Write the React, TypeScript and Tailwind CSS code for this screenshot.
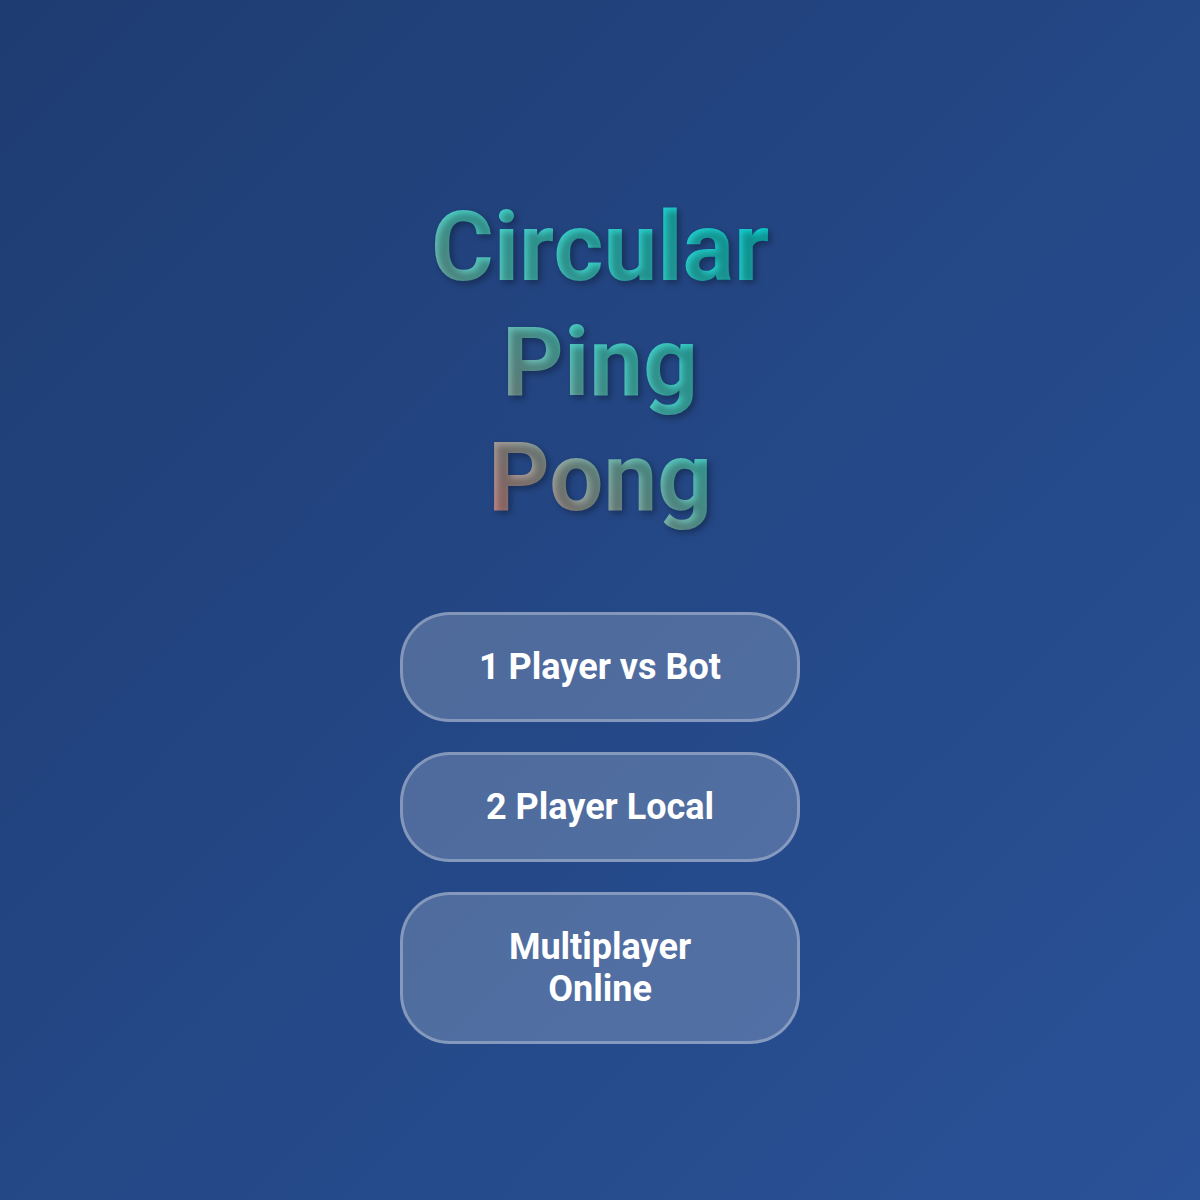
import React from 'react';

const modes = [
  { id: 'bot', label: '1 Player vs Bot' },
  { id: 'local', label: '2 Player Local' },
  { id: 'online', label: 'Multiplayer Online' },
];

export default function App() {
  return (
    <div className="min-h-screen w-full bg-[linear-gradient(135deg,#1e3c72,#2a5298)] font-['Roboto','Liberation_Sans',sans-serif] flex flex-col items-center pt-[190px]">
      <h1 className="w-[400px] text-center text-[96px] leading-[1.2] font-bold bg-[linear-gradient(45deg,#ff6b6b,#4ecdc4,#00d2d3)] bg-clip-text text-transparent [text-shadow:3px_3px_6px_rgba(0,0,0,0.3)] mb-[76px]">
        Circular Ping Pong
      </h1>
      <div className="flex flex-col gap-[30px]">
        {modes.map((m) => (
          <button
            key={m.id}
            className="w-[400px] px-16 py-[31px] rounded-[50px] border-[3px] border-white/30 bg-white/20 text-white text-[36px] leading-[42px] font-bold"
          >
            {m.label}
          </button>
        ))}
      </div>
    </div>
  );
}
